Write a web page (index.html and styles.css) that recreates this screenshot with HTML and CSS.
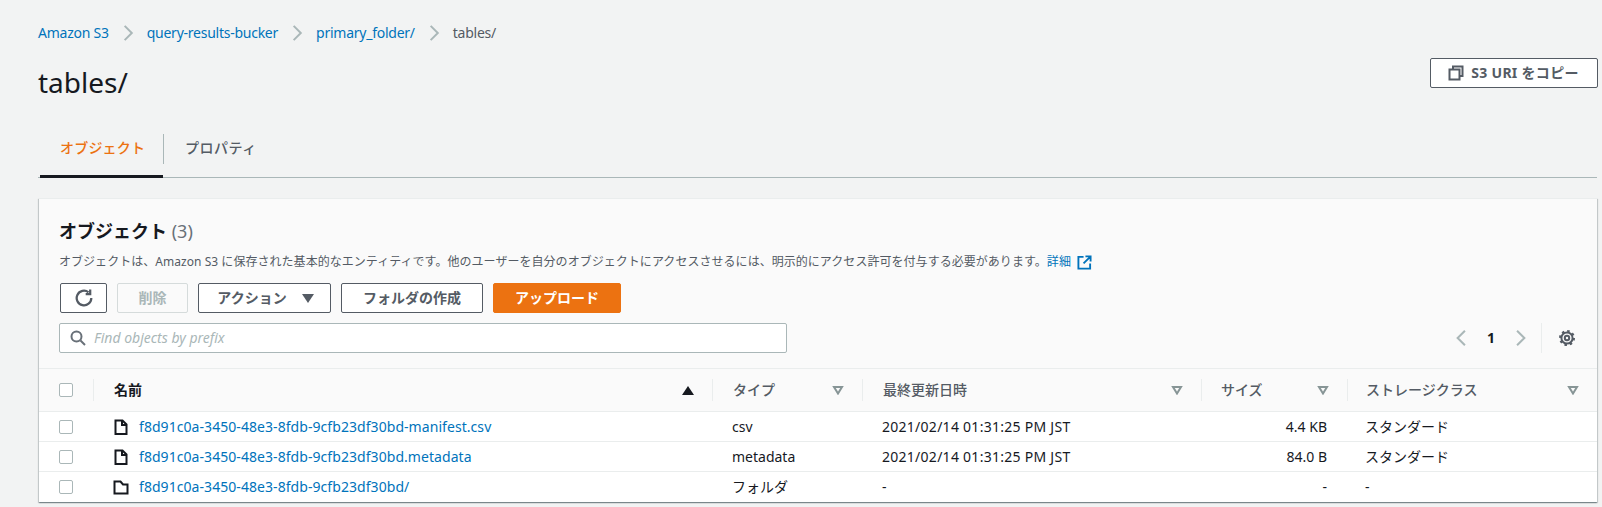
FILE: index.html
```html
<!DOCTYPE html>
<html lang="ja">
<head>
<meta charset="utf-8">
<title>tables/ - S3</title>
<link rel="stylesheet" href="styles.css">
</head>
<body>
<nav class="crumbs">
  <a href="#">Amazon S3</a>
  <svg class="chev" viewBox="0 0 10 16"><path d="M1.500 1.500 8 8l-6.500 6.500"/></svg>
  <a href="#">query-results-bucker</a>
  <svg class="chev" viewBox="0 0 10 16"><path d="M1.500 1.500 8 8l-6.500 6.500"/></svg>
  <a href="#">primary_folder/</a>
  <svg class="chev" viewBox="0 0 10 16"><path d="M1.500 1.500 8 8l-6.500 6.500"/></svg>
  <span>tables/</span>
</nav>
<header class="head">
  <h1>tables/</h1>
  <button class="btn copy">
    <svg class="ico16" viewBox="0 0 16 16"><path d="M5 4V1.500h9.500V11H12M1.500 4.500H11.500V14.500H1.500Z"/></svg>
    S3 URI をコピー
  </button>
</header>
<div class="tabs">
  <a class="tab active" href="#">オブジェクト</a>
  <a class="tab" href="#">プロパティ</a>
</div>
<section class="panel">
  <div class="panel-head">
    <h2>オブジェクト <span class="count">(3)</span></h2>
    <p class="desc">オブジェクトは、Amazon S3 に保存された基本的なエンティティです。他のユーザーを自分のオブジェクトにアクセスさせるには、明示的にアクセス許可を付与する必要があります。<a href="#">詳細</a>
      <svg class="ext" viewBox="0 0 16 16"><path d="M7 2H1.500v12.500H14V9M9 1.500h5.500V7M14 2 7 9"/></svg>
    </p>
    <div class="actions">
      <button class="btn refresh"><svg class="ico18" viewBox="0 0 16 16"><path d="M14.500 8A6.500 6.500 0 1 1 12 2.900M13.500 .5v4h-4"/></svg></button>
      <button class="btn del" disabled>削除</button>
      <button class="btn action">アクション<span class="caret"></span></button>
      <button class="btn folder">フォルダの作成</button>
      <button class="btn upload">アップロード</button>
    </div>
    <div class="filter">
      <div class="search">
        <svg class="ico16 mag" viewBox="0 0 16 16"><circle cx="6.500" cy="6.500" r="5"/><path d="m10.500 10.500 4.500 4.500"/></svg>
        <span>Find objects by prefix</span>
      </div>
      <div class="pager">
        <svg class="pg" viewBox="0 0 10 16"><path d="M8.500 1.500 2 8l6.500 6.500"/></svg>
        <b>1</b>
        <svg class="pg" viewBox="0 0 10 16"><path d="M1.500 1.500 8 8l-6.500 6.500"/></svg>
        <i class="vsep"></i>
        <svg class="ico16 gear" viewBox="0 0 16 16"><circle cx="8" cy="8" r="2.200"/><circle cx="8" cy="8" r="5.600"/><circle class="teeth" cx="8" cy="8" r="7"/></svg>
      </div>
    </div>
  </div>
  <div class="row thead">
    <div class="cell chk"><i class="box"></i></div>
    <div class="cell th first sorted">名前<span class="sort-up"></span></div>
    <div class="cell th">タイプ<svg class="sort-off" viewBox="0 0 12 10"><path d="M2 2h8L6 8.500Z"/></svg></div>
    <div class="cell th">最終更新日時<svg class="sort-off" viewBox="0 0 12 10"><path d="M2 2h8L6 8.500Z"/></svg></div>
    <div class="cell th tight">サイズ<svg class="sort-off" viewBox="0 0 12 10"><path d="M2 2h8L6 8.500Z"/></svg></div>
    <div class="cell th cls">ストレージクラス<svg class="sort-off" viewBox="0 0 12 10"><path d="M2 2h8L6 8.500Z"/></svg></div>
  </div>
  <div class="row">
    <div class="cell chk"><i class="box"></i></div>
    <div class="cell name"><svg class="file" viewBox="0 0 16 16"><path d="M2.500 1.500h7l4 4V15h-11ZM9 1.500V6h4.500"/></svg><a href="#">f8d91c0a-3450-48e3-8fdb-9cfb23df30bd-manifest.csv</a></div>
    <div class="cell">csv</div>
    <div class="cell stamp">2021/02/14 01:31:25 PM JST</div>
    <div class="cell num">4.4 KB</div>
    <div class="cell cls">スタンダード</div>
  </div>
  <div class="row">
    <div class="cell chk"><i class="box"></i></div>
    <div class="cell name"><svg class="file" viewBox="0 0 16 16"><path d="M2.500 1.500h7l4 4V15h-11ZM9 1.500V6h4.500"/></svg><a href="#">f8d91c0a-3450-48e3-8fdb-9cfb23df30bd.metadata</a></div>
    <div class="cell">metadata</div>
    <div class="cell stamp">2021/02/14 01:31:25 PM JST</div>
    <div class="cell num">84.0 B</div>
    <div class="cell cls">スタンダード</div>
  </div>
  <div class="row last">
    <div class="cell chk"><i class="box"></i></div>
    <div class="cell name"><svg class="file" viewBox="0 0 16 16"><path d="M1.500 2.500h6L10 5.500h4.500v9h-13Z"/></svg><a href="#">f8d91c0a-3450-48e3-8fdb-9cfb23df30bd/</a></div>
    <div class="cell">フォルダ</div>
    <div class="cell">-</div>
    <div class="cell num">-</div>
    <div class="cell cls">-</div>
  </div>
</section>
</body>
</html>
```

FILE: styles.css
```css
* { box-sizing: border-box; }
html, body { margin: 0; height: 507px; overflow: hidden; }
body {
  background: #f2f3f3;
  color: #16191f;
  font: 14px/20px "Noto Sans", "Noto Sans CJK JP", sans-serif;
  padding: 0 5px 0 38px;
}
a { color: #0073bb; text-decoration: none; }
svg { fill: none; stroke: currentColor; stroke-width: 2; flex: none; }

.crumbs { display: flex; align-items: center; height: 20px; margin-top: 23px; color: #545b64; letter-spacing: -.25px; }
.chev { width: 11px; height: 18px; margin: 0 13px 0 14px; color: #aab7b8; stroke-width: 1.8; }

.head { display: flex; justify-content: space-between; align-items: flex-start; margin-top: 15px; }
h1 { margin: 0; padding-top: 4px; font-size: 28px; line-height: 40px; font-weight: 400; }

.btn {
  display: inline-flex; align-items: center; justify-content: center;
  height: 30px; padding: 0; border: 1px solid #545b64; border-radius: 2px;
  background: #fff; color: #545b64;
  font: 700 14px/20px "Noto Sans", "Noto Sans CJK JP", sans-serif;
}
.ico16 { width: 16px; height: 16px; }
.ico18 { width: 18px; height: 18px; }
.copy { width: 168px; gap: 7px; margin-right: -1px; padding-right: 1px; letter-spacing: .3px; }

.tabs { display: flex; height: 53px; margin-top: 23px; border-bottom: 1px solid #aab7b8; }
.tab { display: block; height: 53px; padding-top: 13px; color: #545b64; font-weight: 500; position: relative; }
.tab.active { width: 123px; margin-left: 2px; padding-left: 20px; color: #ec7211; border-bottom: 3px solid #16191f; letter-spacing: .2px; }
.tab.active::after { content: ""; position: absolute; right: -1px; top: 9px; height: 30px; width: 1px; background: #aab7b8; }
.tab:not(.active) { padding-left: 22px; letter-spacing: .5px; }

.panel {
  margin: 20px 0 0 1px; width: 1558px; background: #fff;
  box-shadow: 0 1px 1px 0 rgba(0,28,36,.3), 1px 1px 1px 0 rgba(0,28,36,.15), -1px 1px 1px 0 rgba(0,28,36,.15);
  border-top: 1px solid #eaeded;
}
.panel-head { background: #fafafa; padding: 21px 20px 0; height: 170px; border-bottom: 1px solid #eaeded; }
h2 { margin: 0; font-size: 18px; line-height: 22px; font-weight: 700; }
.count { font-weight: 400; color: #687078; }
.desc { display: flex; align-items: center; margin: 12px 0 0; font-size: 12px; line-height: 16px; color: #545b64; white-space: nowrap; letter-spacing: .04px; }
.ext { width: 15px; height: 15px; margin-left: 6px; color: #0073bb; }

.actions { display: flex; gap: 10px; margin-top: 13px; padding-left: 1px; }
.refresh { width: 47px; }
.del { width: 71px; background: #fafafa; border-color: #d5dbdb; color: #aab7b8; }
.action { width: 133px; gap: 15px; padding-left: 2px; }
.caret { width: 0; height: 0; border-left: 6px solid transparent; border-right: 6px solid transparent; border-top: 9px solid #545b64; }
.folder { width: 142px; }
.upload { width: 128px; background: #ec7211; border-color: #ec7211; color: #fff; }

.filter { display: flex; justify-content: space-between; align-items: center; margin-top: 10px; }
.search {
  display: flex; align-items: center; gap: 8px; width: 728px; height: 30px; padding-left: 10px;
  background: #fff; border: 1px solid #aab7b8; border-radius: 2px;
  font-style: italic; color: #aab7b8; font-size: 14px;
}
.mag { color: #687078; }
.pager { display: flex; align-items: center; color: #16191f; }
.pg { width: 12px; height: 18px; color: #aab7b8; stroke-width: 1.8; }
.pager b { width: 48px; text-align: center; font-size: 14px; }
.vsep { width: 1px; height: 30px; background: #eaeded; margin: 0 17px 0 14px; }
.gear { color: #545b64; margin-right: 2px; }
.teeth { stroke-width: 2; stroke-dasharray: 2.500 2.998; }

.row {
  display: grid; grid-template-columns: 54px 619px 150px 339px 146px 250px;
  height: 30px; align-items: center; background: #fff; border-bottom: 1px solid #eaeded;
}
.row.last { border-bottom: 0; }
.thead { height: 43px; background: #fafafa; }
.cell { display: flex; align-items: center; padding: 0 20px; color: #16191f; white-space: nowrap; }
.cell.chk { padding: 0 0 0 20px; }
.cell.tight { padding-left: 19px; }
.cell.cls { padding-left: 18px; }
.stamp { letter-spacing: .27px; }
.box { display: block; width: 14px; height: 14px; background: #fff; border: 1px solid #aab7b8; border-radius: 2px; }
.th { height: 22px; font-weight: 500; color: #545b64; justify-content: space-between; padding-right: 18px; border-left: 1px solid #eaeded; }
.th.sorted { color: #16191f; font-weight: 700; }
.sort-up { width: 0; height: 0; border-left: 6px solid transparent; border-right: 6px solid transparent; border-bottom: 9px solid #16191f; }
.sort-off { width: 12px; height: 10px; color: #879596; }
.name { gap: 10px; padding-left: 20px; }
.name a { letter-spacing: .06px; }
.file { width: 16px; height: 16px; color: #16191f; }
.num { justify-content: flex-end; padding-right: 20px; }
```
